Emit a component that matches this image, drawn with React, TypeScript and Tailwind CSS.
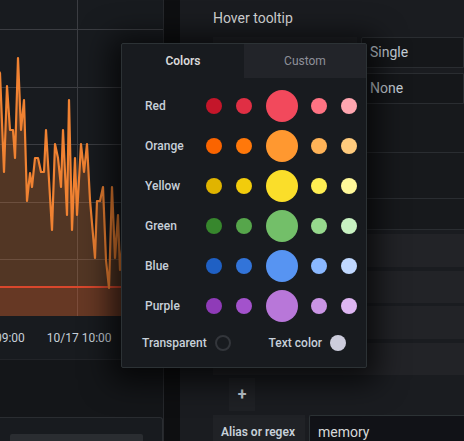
import React from "react";

const palette = [
  { name: "Red", colors: ["#C4162A", "#E02F44", "#F2495C", "#FF7383", "#FFA6B0"] },
  { name: "Orange", colors: ["#FA6400", "#FF780A", "#FF9830", "#FFB357", "#FFCB7D"] },
  { name: "Yellow", colors: ["#E0B400", "#F2CC0C", "#FADE2A", "#FFEE52", "#FFF899"] },
  { name: "Green", colors: ["#37872D", "#56A64B", "#73BF69", "#96D98D", "#C8F2C2"] },
  { name: "Blue", colors: ["#1F60C4", "#3274D9", "#5794F2", "#8AB8FF", "#C0D8FF"] },
  { name: "Purple", colors: ["#8F3BB8", "#A352CC", "#B877D9", "#CA95E5", "#DEB6F2"] },
];

// series points traced from the panel (x, y)
const points: [number, number][] = [
  [-2, 70], [0, 73], [4, 172], [7, 86], [10, 130], [13, 130], [15, 158], [18, 58],
  [21, 130], [24, 100], [27, 201], [30, 173], [32, 187], [35, 158], [38, 158],
  [41, 172], [44, 172], [46, 130], [52, 230], [55, 144], [58, 158], [61, 187],
  [63, 130], [67, 215], [69, 100], [72, 230], [75, 158], [77, 215], [81, 144],
  [84, 172], [87, 144], [90, 200], [95, 258], [97, 201], [100, 201], [103, 187],
  [106, 260], [109, 288], [112, 187], [115, 258], [118, 215], [120, 270],
  [124, 230], [128, 260], [132, 210], [136, 250], [140, 235], [146, 270],
  [150, 240], [156, 262], [163, 250],
];

const line = points.map(([x, y], i) => `${i ? "L" : "M"}${x} ${y}`).join(" ");
const area = `${line} L163 316 L-2 316 Z`;

function Chart() {
  return (
    <svg width="163" height="316" viewBox="0 0 163 316" className="block shrink-0">
      {[29, 87, 144, 202, 259].map((y) => (
        <line key={y} x1="0" x2="163" y1={y + 0.5} y2={y + 0.5} stroke="#3b3d42" strokeWidth="1" />
      ))}
      <line x1="77.5" x2="77.5" y1="0" y2="316" stroke="#3b3d42" strokeWidth="1" />
      <path d={area} fill="#f08232" fillOpacity="0.27" />
      <rect x="0" y="287" width="163" height="29" fill="#e0452d" fillOpacity="0.14" />
      <line x1="0" x2="163" y1="287" y2="287" stroke="#d9472c" strokeWidth="2" />
      <path d={line} fill="none" stroke="#f08232" strokeWidth="2.2" strokeLinejoin="round" />
    </svg>
  );
}

function ColorPicker() {
  return (
    <div className="absolute left-[121px] top-[43px] w-[246px] h-[325px] bg-[#181b1f] border border-[#2c3235] rounded-[2px] shadow-[0_4px_30px_10px_rgba(0,0,0,0.7)] flex flex-col">
      <div className="flex h-[34px] shrink-0">
        <div className="flex-1 flex items-center justify-center text-[12px] font-semibold text-[#d8d9da]">
          Colors
        </div>
        <div className="flex-1 flex items-center justify-center text-[12px] text-[#8e9099] bg-[#222429]">
          Custom
        </div>
      </div>

      <div className="flex flex-col gap-[8px] pt-[12px] pl-[23px] shrink-0">
        {palette.map((row) => (
          <div key={row.name} className="flex items-center h-[32px]">
            <span className="w-[61px] text-[12px] font-medium text-[#c7d0d9]">{row.name}</span>
            <div className="flex items-center w-[151px] justify-between">
              {row.colors.map((c, i) => (
                <span
                  key={c}
                  className={i === 2 ? "block w-[32px] h-[32px] rounded-full" : "block w-[16px] h-[16px] rounded-full"}
                  style={{ backgroundColor: c }}
                />
              ))}
            </div>
          </div>
        ))}
      </div>

      <div className="flex items-center justify-between pl-[20px] pr-[20px] mt-[13px] h-[16px] shrink-0">
        <div className="flex items-center gap-[8px]">
          <span className="text-[12px] font-medium text-[#c7d0d9]">Transparent</span>
          <span className="block w-[16px] h-[16px] rounded-full border-2 border-[#33363b]" />
        </div>
        <div className="flex items-center gap-[8px]">
          <span className="text-[12px] font-medium text-[#c7d0d9]">Text color</span>
          <span className="block w-[16px] h-[16px] rounded-full bg-[#ccccdc]" />
        </div>
      </div>
    </div>
  );
}

export default function App() {
  return (
    <div className="relative w-[464px] h-[441px] overflow-hidden bg-[#111217] flex font-[Roboto,'Liberation_Sans',sans-serif]">
      {/* panel preview + query */}
      <div className="w-[163px] flex flex-col shrink-0">
        <div className="h-[360px] shrink-0 bg-[#181b1f] flex flex-col border-b border-[#222428] overflow-hidden">
          <Chart />
          <div className="flex-1 flex items-center gap-[22px] ml-[-40px] text-[12px] text-[#c7d0d9] whitespace-nowrap">
            <span>10/17 09:00</span>
            <span>10/17 10:00</span>
          </div>
        </div>
        <div className="h-[57px] shrink-0 bg-[#141619]" />
        <div className="flex-1 bg-[#181b1f] border-t border-r border-[#2a2d31] rounded-tr-[3px] pt-[16px] pl-[10px]">
          <div className="w-[133px] h-full bg-[#2a2d31] rounded-t-[2px]" />
        </div>
      </div>

      {/* splitter */}
      <div className="w-[17px] shrink-0 bg-[#0e0f11] border-l border-[#26282c]" />

      {/* options pane */}
      <div className="flex-1 bg-[#1a1c20] pl-[33px] flex flex-col overflow-hidden">
        <div className="h-[37px] shrink-0 flex items-center text-[14px] text-[#d8d9da]">Hover tooltip</div>

        <div className="flex h-[31px] shrink-0 gap-[4px]">
          <div className="w-[144px] bg-[#202226]" />
          <div className="flex-1 flex items-center pl-[8px] bg-[#15171a] border border-[#2a2d31] rounded-l-[2px] text-[14px] text-[#c7d0d9]">
            Single
          </div>
        </div>
        <div className="flex h-[31px] shrink-0 gap-[4px] mt-[5px]">
          <div className="w-[144px] bg-[#202226]" />
          <div className="flex-1 flex items-center pl-[8px] bg-[#15171a] border border-[#2a2d31] rounded-l-[2px] text-[14px] text-[#c7d0d9]">
            None
          </div>
        </div>

        <div className="flex flex-col shrink-0 bg-[#17191c]">
          <div className="h-[49px] border-b border-[#2a2d31]" />
          <div className="h-[46px] border-b border-[#2a2d31]" />
          <div className="h-[31px] border-b border-[#2a2d31]" />
        </div>

        <div className="mt-[4px] h-[33px] shrink-0 bg-[#222327]" />
        <div className="mt-[4px] h-[32px] shrink-0 bg-[#222327]" />
        <div className="mt-[3px] h-[33px] shrink-0 bg-[#222327]" />
        <div className="mt-[4px] h-[32px] shrink-0 bg-[#222327]" />

        <div className="mt-[3px] ml-[16px] w-[26px] h-[33px] shrink-0 bg-[#1f2125] flex items-center justify-center text-[16px] font-bold text-[#c7d0d9]">
          +
        </div>

        <div className="flex mt-[4px] gap-[4px] h-[33px] shrink-0">
          <div className="w-[92px] bg-[#202226] flex items-center pl-[8px] text-[12px] font-semibold text-[#c7d0d9] whitespace-nowrap">
            Alias or regex
          </div>
          <div className="flex-1 bg-[#111217] border-t border-l border-[#2c3235] rounded-tl-[2px] flex items-center pl-[8px] text-[14px] text-[#d8d9da]">
            memory
          </div>
        </div>
      </div>

      <ColorPicker />
    </div>
  );
}
